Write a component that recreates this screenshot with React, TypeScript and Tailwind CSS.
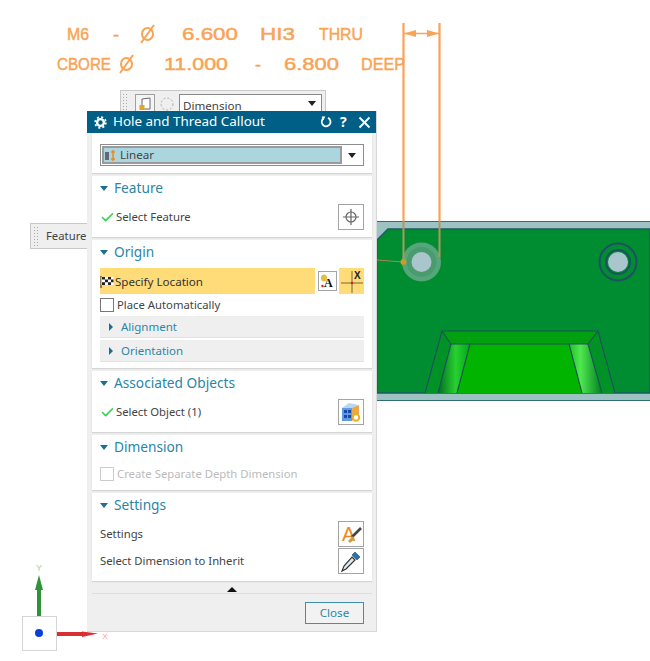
import { Check } from "lucide-react";
import type { ReactNode } from "react";

const font = "font-['Noto_Sans','Open_Sans',sans-serif]";

function Caret({ open = true }: { open?: boolean }) {
  if (!open) return <span className="h-0 w-0 border-y-[4px] border-l-[4px] border-y-transparent border-l-[#1c6f92]" />;
  return <span className="h-0 w-0 border-x-[4.5px] border-t-[5px] border-x-transparent border-t-[#1c6f92]" />;
}

function Grip({ className }: { className: string }) {
  return (
    <span className={`absolute bg-[radial-gradient(#a8a8a8_1px,transparent_1px)] bg-[length:3px_3px] ${className}`} />
  );
}

function Section({ title, h, children }: { title: string; h: string; children: ReactNode }) {
  return (
    <section className={`bg-white shadow-[0_1px_1px_#d5d5d5] ${h}`}>
      <header className="flex h-6 items-center gap-[6px] pl-2">
        <Caret />
        <h2 className="text-[13.7px] leading-none text-[#2a86a8]">{title}</h2>
      </header>
      <div className="px-2">{children}</div>
    </section>
  );
}

function IconBtn({ children }: { children: ReactNode }) {
  return (
    <button className="flex h-[26px] w-[26px] items-center justify-center border border-[#a3a3a3] bg-white">{children}</button>
  );
}

function Row({ label, children, ok }: { label: string; children?: ReactNode; ok?: boolean }) {
  return (
    <div className="flex h-[26px] items-center justify-between">
      <span className="flex items-center gap-[1px] pt-[1px] text-[11.3px] text-[#444]">
        {ok && <Check className="h-[15px] w-[15px] text-[#2fd44f]" strokeWidth={2.5} />}
        {label}
      </span>
      {children}
    </div>
  );
}

function Sub({ label }: { label: string }) {
  return (
    <div className="flex h-[22px] items-center gap-[8px] border-b border-[#e2e2e2] bg-[#efefef] pl-[9px] text-[11.5px] text-[#2a86a8]">
      <Caret open={false} />
      {label}
    </div>
  );
}

function CadDrawing() {
  const orange = "#f9a355";
  const text = (s: string, x: number, w: number, y: number) => (
    <text x={x} y={y} textLength={w} lengthAdjust="spacingAndGlyphs" fontSize="17" fontFamily="'Liberation Sans', sans-serif" fill={orange} stroke={orange} strokeWidth="0.45">
      {s}
    </text>
  );
  return (
    <svg className="absolute left-0 top-0" width="650" height="661" viewBox="0 0 650 661">
      <defs>
        <linearGradient id="fl" x1="0" x2="1" y1="0" y2="0">
          <stop offset="0" stopColor="#006f20" />
          <stop offset="0.55" stopColor="#28d030" />
          <stop offset="1" stopColor="#00a818" />
        </linearGradient>
        <linearGradient id="fr" x1="0" x2="1" y1="0" y2="0">
          <stop offset="0" stopColor="#20c028" />
          <stop offset="0.35" stopColor="#50e850" />
          <stop offset="1" stopColor="#007f20" />
        </linearGradient>
      </defs>

      {text("M6", 67, 22, 40)}
      {text("-", 113, 6, 40)}
      {text("6.600", 182, 56, 40)}
      {text("HI3", 260, 35, 40)}
      {text("THRU", 319, 44, 40)}
      {text("CBORE", 57, 54, 69.5)}
      {text("11.000", 164, 64, 69.5)}
      {text("-", 255, 6, 69.5)}
      {text("6.800", 284, 55, 69.5)}
      {text("DEEP", 361, 44, 69.5)}
      <g stroke={orange} strokeWidth="2" fill="none">
        <ellipse cx="147.5" cy="34" rx="5.5" ry="6" />
        <path d="M141 43 L154 25" />
        <ellipse cx="126.5" cy="64" rx="5.5" ry="6" />
        <path d="M120 73 L133 55" />
      </g>

      {/* part */}
      <rect x="377" y="221" width="273" height="180" fill="#9cc2c4" />
      <path d="M377 221.5H650M377 400.5H650" stroke="#2f6f74" strokeWidth="1.2" />
      <path d="M377 240 L388 229 H650 V393 H377 Z" fill="#008c30" stroke="#1f5a60" strokeWidth="1.4" />
      <path d="M442 331 H598 L615 393 H425 Z" fill="#009226" />
      <path d="M442 331 H598 L588 344 H451 Z" fill="#00a010" />
      <path d="M451 344 H470 L457 393 H438 Z" fill="url(#fl)" />
      <path d="M569 344 H588 L602 393 H582 Z" fill="url(#fr)" />
      <path d="M470 344 H569 L582 393 H457 Z" fill="#00b400" />
      <g stroke="#20505a" strokeWidth="1.1" fill="none">
        <path d="M442 331 H598 L615 393 M442 331 L425 393" />
        <path d="M442 331 L451 344 M598 331 L588 344" />
        <path d="M451 344 H588 L602 393 M451 344 L438 393" />
        <path d="M470 344 L457 393 M569 344 L582 393" />
      </g>

      <circle cx="421.5" cy="262" r="19.5" fill="#56a67c" />
      <circle cx="421.5" cy="262" r="15" fill="#4a9c6e" />
      <circle cx="421.5" cy="262" r="10" fill="#a9c6cc" />
      <circle cx="618" cy="262" r="18.5" fill="none" stroke="#1f5064" strokeWidth="2" />
      <circle cx="618" cy="262" r="12" fill="none" stroke="#1f5064" strokeWidth="2" />
      <circle cx="618" cy="262" r="10" fill="#a9c6cc" />

      {/* dimension lines */}
      <path d="M403.5 23 V221 M439.5 23 V221" stroke={orange} strokeWidth="2.2" />
      <path d="M403.5 221 V262 M439.5 221 V257" stroke="#b0975e" strokeWidth="2" />
      <path d="M377 260 L403 262" stroke="#a08a50" strokeWidth="1" />
      <circle cx="403.5" cy="262" r="3" fill="#c89a30" />
      <path d="M404 33.5 H439" stroke={orange} strokeWidth="1.6" />
      <path d="M404 33.5 L416 30 V37 Z M439 33.5 L427 30 V37 Z" fill={orange} />

      {/* triad */}
      <rect x="22.5" y="616.5" width="34" height="34" fill="#fff" stroke="#d5d5d5" />
      <circle cx="39" cy="633" r="4" fill="#0a3fd8" />
      <path d="M37 616 V590 H35 L39 575 L43 590 H41 V616 Z" fill="#2f9438" />
      <path d="M57 632 H82 V631.5 L98 633.5 L82 637 V636 H57 Z" fill="#d83030" />
      <text x="39" y="571" textAnchor="middle" fontSize="9" fontFamily="'Liberation Sans', sans-serif" fill="#a8d0a8">Y</text>
      <text x="105" y="639" textAnchor="middle" fontSize="8" fontFamily="'Liberation Sans', sans-serif" fill="#f0a0a0">X</text>
    </svg>
  );
}

export default function App() {
  return (
    <div className={`relative h-[661px] w-[650px] overflow-hidden bg-white ${font}`}>
      <CadDrawing />

      {/* dimension toolbar, mostly under the dialog */}
      <div className="absolute left-[120px] top-[90px] flex h-[26px] w-[206px] items-start gap-[3px] border border-[#c8c8c8] bg-[#efefef] pl-[14px] pt-[3px]">
        <Grip className="left-[1px] top-[2px] h-[18px] w-[6px]" />
        <span className="flex h-[20px] w-[20px] items-center justify-center border border-[#a0a0a0] bg-[#f4f4f4]">
          <svg width="14" height="14" viewBox="0 0 14 14">
            <path d="M4 2 L12 1 V12 L4 12 Z" fill="#fff" stroke="#667" />
            <rect x="1.5" y="8" width="5" height="5" fill="#e0a820" />
          </svg>
        </span>
        <span className="flex h-[20px] w-[18px] items-center justify-center">
          <svg width="16" height="16" viewBox="0 0 16 16">
            <circle cx="8" cy="8" r="6" fill="none" stroke="#aaa" strokeDasharray="2 2" />
          </svg>
        </span>
        <div className="relative flex h-[22px] w-[143px] items-center border border-[#8a8a8a] bg-white pl-[3px] pt-[1px] text-[11.6px] text-[#444]">
          Dimension
          <span className="absolute right-[5px] top-[6px] h-0 w-0 border-x-[4px] border-t-[5px] border-x-transparent border-t-[#222]" />
        </div>
      </div>

      {/* feature toolbar */}
      <div className="absolute left-[30px] top-[223px] flex h-[26px] w-[60px] items-center border border-[#c8c8c8] bg-[#efefef] pl-[15px] pt-[1px] text-[11.3px] text-[#444]">
        <Grip className="left-[2px] top-[2px] h-[20px] w-[6px]" />
        Feature
      </div>

      <div className="absolute left-[87px] top-[111px] flex h-[521px] w-[290px] flex-col border-b border-r border-[#d8d8d8] bg-[#efefef]">
        <div className="flex h-[22px] items-center bg-[#005f87] pl-[7px] pr-[4px] text-white">
          <svg width="13" height="13" viewBox="0 0 13 13" fill="none" stroke="#fff">
            <circle cx="6.5" cy="6.5" r="3.4" strokeWidth="2.4" />
            <circle cx="6.5" cy="6.5" r="5.4" strokeWidth="1.6" strokeDasharray="2.1 2.14" />
          </svg>
          <span className="ml-[6px] flex-1 text-[13.4px] leading-none">Hole and Thread Callout</span>
          <svg width="12" height="12" viewBox="0 0 12 12" fill="none" stroke="#fff" strokeWidth="1.8">
            <path d="M3.2 2.6 A4.4 4.4 0 1 0 8 1.9" />
            <path d="M2 .8 L5 .8 L3 4 Z" fill="#fff" strokeWidth="0.6" />
          </svg>
          <span className="ml-[8px] w-[8px] text-[14px] font-bold leading-none">?</span>
          <svg className="ml-[9px]" width="15" height="15" viewBox="0 0 15 15" stroke="#fff" strokeWidth="1.9">
            <path d="M2.5 2.5 L12.5 12.5 M12.5 2.5 L2.5 12.5" />
          </svg>
        </div>

        <div className="flex flex-col gap-[3px] pl-[5px] pr-[4px]">
          <div className="h-[40px] bg-white px-2 pt-[11px] shadow-[0_1px_1px_#d5d5d5]">
            <div className="flex h-[22px] items-center border border-[#8d8d8d] bg-white p-[1px]">
              <div className="flex h-full flex-1 items-center gap-[2px] border-2 border-[#9a9a9a] bg-[#abd6e0] text-[11.6px] text-[#444]">
                <svg width="14" height="13" viewBox="0 0 14 13">
                  <rect x="1" y="3" width="4" height="8" fill="#667" />
                  <path d="M9 1 V12 M7 3 H11 M7 10 H11" stroke="#e88a20" strokeWidth="1.5" />
                </svg>
                Linear
              </div>
              <span className="mx-[6px] h-0 w-0 border-x-[4px] border-t-[5px] border-x-transparent border-t-[#222]" />
            </div>
          </div>

          <Section title="Feature" h="h-[61px]">
            <div className="pt-1">
              <Row label="Select Feature" ok>
                <IconBtn>
                  <svg width="18" height="18" viewBox="0 0 18 18" fill="none" stroke="#666" strokeWidth="1.2">
                    <circle cx="9" cy="9" r="5" />
                    <path d="M9 1 V17 M1 9 H17" />
                  </svg>
                </IconBtn>
              </Row>
            </div>
          </Section>

          <Section title="Origin" h="h-[128px]">
            <div className="pt-1">
              <div className="flex h-[26px] items-center">
                <div className="flex h-full w-[215px] items-center gap-[1px] bg-[#ffdc78] pt-[1px] text-[11.6px] text-[#333]">
                  <svg width="14" height="14" viewBox="0 0 14 14">
                    <path d="M1 1 V13" stroke="#222" />
                    <rect x="1.5" y="2" width="12" height="8" fill="#fff" />
                    <path d="M2 2h3v2.6H2zM8 2h3v2.6H8zM5 4.6h3v2.6H5zM11 4.6h2.5v2.6H11zM2 7.2h3V10H2zM8 7.2h3V10H8z" fill="#222" />
                  </svg>
                  Specify Location
                </div>
                <button className="ml-[3px] flex h-[20px] w-[19px] items-center justify-center border border-[#a3a3a3] bg-white">
                  <svg width="17" height="17" viewBox="0 0 17 17">
                    <ellipse cx="5" cy="5" rx="3" ry="3.6" fill="#e0c040" />
                    <circle cx="3.5" cy="13" r="1.2" fill="#e02020" />
                    <text x="5" y="14" fontSize="12" fontWeight="700" fontFamily="'Liberation Serif', serif" fill="#111">A</text>
                  </svg>
                </button>
                <button className="ml-[2px] flex h-full w-[25px] items-center justify-center bg-[#ffdc78]">
                  <svg width="24" height="24" viewBox="0 0 24 24">
                    <path d="M12 2 V24 M1 14 H23" stroke="#77663a" strokeWidth="1" />
                    <circle cx="12" cy="14" r="1.3" fill="#e02020" />
                    <text x="14" y="10" fontSize="10" fontWeight="700" fontFamily="'Liberation Sans', sans-serif" fill="#222">X</text>
                  </svg>
                </button>
              </div>
              <label className="flex h-[22px] items-center gap-[3px] text-[11.3px] text-[#444]">
                <span className="h-[14px] w-[14px] border border-[#777] bg-white" />
                <span className="pt-[1px]">Place Automatically</span>
              </label>
              <div className="flex flex-col gap-[2px]">
                <Sub label="Alignment" />
                <Sub label="Orientation" />
              </div>
            </div>
          </Section>

          <Section title="Associated Objects" h="h-[61px]">
            <div className="pt-1">
              <Row label="Select Object (1)" ok>
                <IconBtn>
                  <svg width="22" height="22" viewBox="0 0 22 22">
                    <path d="M11 5 L19 4 V15 L12 20 Z" fill="#eda45c" />
                    <path d="M2 7 H12 V20 H2 Z" fill="#5f9be0" />
                    <path d="M2 7 L9 2 L19 4 L12 7 Z" fill="#b5d8ec" />
                    <path d="M4 9h3v3H4zM8 9h3v3H8zM4 14h3v3H4zM8 14h3v3H8z" fill="#1848a8" />
                    <path d="M16 6 V13" stroke="#e8b020" strokeWidth="3" />
                    <circle cx="16" cy="16.5" r="3.2" fill="#fff" stroke="#e8b020" strokeWidth="2" />
                  </svg>
                </IconBtn>
              </Row>
            </div>
          </Section>

          <Section title="Dimension" h="h-[55px]">
            <label className="mt-[6px] flex h-[17px] items-center gap-[3px] text-[11.3px] text-[#bbb]">
              <span className="h-[14px] w-[14px] border border-[#ccc] bg-white" />
              <span className="pt-[1px]">Create Separate Depth Dimension</span>
            </label>
          </Section>

          <Section title="Settings" h="h-[88px]">
            <div className="flex flex-col gap-[1px] pt-1">
              <Row label="Settings">
                <IconBtn>
                  <svg width="24" height="24" viewBox="0 0 24 24">
                    <text x="3" y="19" fontSize="20" fontFamily="'Liberation Sans', sans-serif" fill="#f08a20">A</text>
                    <path d="M22 6 L13 15" stroke="#444" strokeWidth="2.6" />
                    <path d="M14 14 L9 19 L11 21 L15.5 17 Z" fill="#c8a040" />
                  </svg>
                </IconBtn>
              </Row>
              <Row label="Select Dimension to Inherit">
                <IconBtn>
                  <svg width="24" height="24" viewBox="0 0 24 24">
                    <path d="M16 3 L21 8 L18 11 L13 6 Z" fill="#2a70b0" stroke="#1c4a78" strokeWidth="0.6" />
                    <path d="M13 8 L16 11 L7 20 L3 22 L5 17 Z" fill="#dfeaf2" stroke="#333" strokeWidth="1.2" />
                  </svg>
                </IconBtn>
              </Row>
            </div>
          </Section>
        </div>

        <div className="ml-[5px] mr-[4px] flex h-[13px] items-center justify-center border-b border-[#dedede] pt-[5px]">
          <span className="h-0 w-0 border-x-[5px] border-b-[5px] border-x-transparent border-b-[#111]" />
        </div>
        <div className="flex justify-end pr-[12px] pt-[8px]">
          <button className="h-[22px] w-[59px] border border-[#3f8fb0] bg-[#f2f2f2] text-[11.6px] text-[#2a86a8]">Close</button>
        </div>
      </div>
    </div>
  );
}
